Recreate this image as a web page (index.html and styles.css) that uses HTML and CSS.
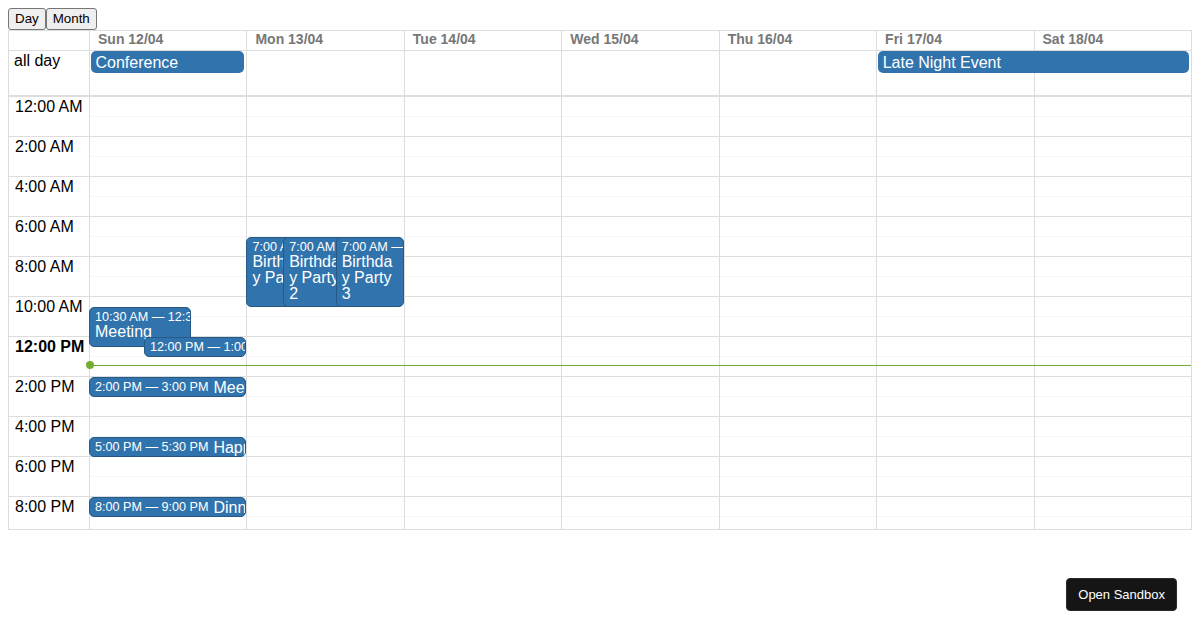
FILE: index.html
```html
<!DOCTYPE html>
<html lang="en">
<head>
    <meta charset="UTF-8">
    <meta name="viewport" content="width=device-width, initial-scale=1.0">
    <title>Week view</title>
    <link rel="stylesheet" href="styles.css">
</head>
<body>

    <div class="toolbar">
        <button class="view-btn">Day</button>
        <button class="view-btn">Month</button>
    </div>

    <div class="calendar">
        <div class="header-row">
            <div class="gutter"></div>
            <div class="head-cell">Sun 12/04</div>
            <div class="head-cell">Mon 13/04</div>
            <div class="head-cell">Tue 14/04</div>
            <div class="head-cell">Wed 15/04</div>
            <div class="head-cell">Thu 16/04</div>
            <div class="head-cell">Fri 17/04</div>
            <div class="head-cell">Sat 18/04</div>
        </div>

        <div class="allday-row">
            <div class="gutter label">all day</div>
            <div class="allday-cells">
                <div class="allday-bg"></div>
                <div class="allday-bg"></div>
                <div class="allday-bg"></div>
                <div class="allday-bg"></div>
                <div class="allday-bg"></div>
                <div class="allday-bg"></div>
                <div class="allday-bg"></div>
                <div class="allday-events">
                    <div class="segment span-sun"><div class="allday-event">Conference</div></div>
                    <div class="segment span-fri-sat"><div class="allday-event">Late Night Event</div></div>
                </div>
            </div>
        </div>

        <div class="time-content">
            <div class="time-gutter">
                <div class="slot-group">12:00 AM</div>
                <div class="slot-group">2:00 AM</div>
                <div class="slot-group">4:00 AM</div>
                <div class="slot-group">6:00 AM</div>
                <div class="slot-group">8:00 AM</div>
                <div class="slot-group">10:00 AM</div>
                <div class="slot-group now">12:00 PM</div>
                <div class="slot-group">2:00 PM</div>
                <div class="slot-group">4:00 PM</div>
                <div class="slot-group">6:00 PM</div>
                <div class="slot-group">8:00 PM</div>
                <div class="slot-group">10:00 PM</div>
            </div>

            <!-- Sun -->
            <div class="day-col">
                <div class="events">
                    <div class="event tall" style="top: 210px; height: 40px; left: 0; width: 65%;">
                        <div class="event-label">10:30 AM — 12:30 PM</div>
                        <div class="event-title">Meeting</div>
                    </div>
                    <div class="event short" style="top: 240px; height: 20px; left: 35%; width: 65%;">
                        <div class="event-label">12:00 PM — 1:00 PM</div>
                        <div class="event-title">Lunch</div>
                    </div>
                    <div class="event short" style="top: 280px; height: 20px; left: 0; width: 100%;">
                        <div class="event-label">2:00 PM — 3:00 PM</div>
                        <div class="event-title">Meeting</div>
                    </div>
                    <div class="event short" style="top: 340px; height: 20px; left: 0; width: 100%;">
                        <div class="event-label">5:00 PM — 5:30 PM</div>
                        <div class="event-title">Happy Hour</div>
                    </div>
                    <div class="event short" style="top: 400px; height: 20px; left: 0; width: 100%;">
                        <div class="event-label">8:00 PM — 9:00 PM</div>
                        <div class="event-title">Dinner</div>
                    </div>
                </div>
            </div>

            <!-- Mon -->
            <div class="day-col">
                <div class="events">
                    <div class="event tall" style="top: 140px; height: 70px; left: 0; width: 43.33%;">
                        <div class="event-label">7:00 AM — 10:30 AM</div>
                        <div class="event-title">Birthday Party</div>
                    </div>
                    <div class="event tall" style="top: 140px; height: 70px; left: 23.33%; width: 43.33%;">
                        <div class="event-label">7:00 AM — 10:30 AM</div>
                        <div class="event-title">Birthday Party 2</div>
                    </div>
                    <div class="event tall" style="top: 140px; height: 70px; left: 56.67%; width: 43.33%;">
                        <div class="event-label">7:00 AM — 10:30 AM</div>
                        <div class="event-title">Birthday Party 3</div>
                    </div>
                </div>
            </div>

            <div class="day-col"></div>
            <div class="day-col"></div>
            <div class="day-col"></div>
            <div class="day-col"></div>
            <div class="day-col"></div>

            <div class="now-line" style="top: 268px;"></div>
        </div>
    </div>

    <button class="sandbox-btn">Open Sandbox</button>

</body>
</html>
```

FILE: styles.css
```css
body {
    margin: 8px;
    font-family: "Liberation Sans", Arial, sans-serif;
    font-size: 16px;
    color: #000;
    background-color: #fff;
}

.toolbar {
    display: flex;
}

.view-btn {
    font: 13.333px "Liberation Sans", Arial, sans-serif;
    height: 22px;
    padding: 0 6px 1px;
    border: 1px solid #767676;
    border-radius: 3px;
    background-color: #efefef;
    color: #000;
}

.calendar {
    display: flex;
    flex-direction: column;
    height: 500px;
    box-sizing: border-box;
    border: 1px solid #ddd;
}

/* header + all day */
.header-row,
.allday-row {
    display: flex;
    flex: none;
}

.header-row {
    height: 20px;
    box-sizing: border-box;
    border-bottom: 1px solid #ddd;
}

.gutter {
    width: 80px;
    flex: none;
}

.label {
    padding: 1px 5px 0;
    box-sizing: border-box;
}

.head-cell {
    flex: 1;
    min-width: 0;
    border-left: 1px solid #ddd;
    padding-left: 8px;
    font-size: 14px;
    font-weight: bold;
    line-height: 17px;
    color: #777;
    white-space: nowrap;
    overflow: hidden;
}

.allday-row {
    height: 44px;
}

.allday-cells {
    flex: 1;
    display: flex;
    position: relative;
}

.allday-bg {
    flex: 1;
    border-left: 1px solid #ddd;
}

.allday-events {
    position: absolute;
    inset: 0;
    display: grid;
    grid-template-columns: repeat(7, 1fr);
    align-content: start;
}

.segment {
    padding: 0 2px 0 1.5px;
    grid-row: 1;
}

.span-sun { grid-column: 1 / 2; }
.span-fri-sat { grid-column: 6 / 8; }

.allday-event {
    background-color: #3174ad;
    color: #fff;
    border-radius: 5px;
    padding: 3px 5px 1px;
    white-space: nowrap;
    overflow: hidden;
}

/* time grid */
.time-content {
    flex: 1;
    min-height: 0;
    display: flex;
    align-items: flex-start;
    position: relative;
    overflow: hidden;
    border-top: 2px solid #ddd;
}

.time-gutter {
    width: 80px;
    flex: none;
}

.slot-group {
    height: 40px;
    box-sizing: border-box;
    border-bottom: 1px solid #ddd;
    padding: 1px 5px 0 6px;
    white-space: nowrap;
}

.slot-group.now {
    font-weight: bold;
}

.day-col {
    flex: 1;
    min-width: 0;
    height: 480px;
    position: relative;
    border-left: 1px solid #ddd;
    background: repeating-linear-gradient(
        to bottom,
        transparent 0 19px,
        #f7f7f7 19px 20px,
        transparent 20px 39px,
        #ddd 39px 40px
    );
}

.events {
    position: absolute;
    top: 0;
    bottom: 0;
    left: -1px;
    right: 0;
}

.event {
    position: absolute;
    box-sizing: border-box;
    display: flex;
    align-items: flex-start;
    padding: 2px 5px;
    background-color: #3174ad;
    border: 1px solid #265985;
    border-radius: 5px;
    color: #fff;
    overflow: hidden;
}

.event.tall {
    flex-direction: column;
    align-items: stretch;
}

.event-label {
    flex: none;
    font-size: 12.6px;
    padding-right: 5px;
    white-space: nowrap;
}

.event-title {
    line-height: 1;
    overflow-wrap: break-word;
}

.short .event-title {
    white-space: nowrap;
    line-height: 16px;
}

.now-line {
    position: absolute;
    z-index: 2;
    left: 80px;
    right: 0;
    height: 0;
    border-top: 1px solid #74ad31;
}

.now-line::before {
    content: "";
    position: absolute;
    left: -3px;
    top: -5px;
    width: 8px;
    height: 8px;
    border-radius: 50%;
    background-color: #74ad31;
}

.sandbox-btn {
    position: fixed;
    right: 23px;
    bottom: 19px;
    height: 33px;
    padding: 0 11px;
    font: 13px "Liberation Sans", Arial, sans-serif;
    color: #fff;
    background-color: #151515;
    border: 1px solid #2a2a2a;
    border-radius: 4px;
}
```
